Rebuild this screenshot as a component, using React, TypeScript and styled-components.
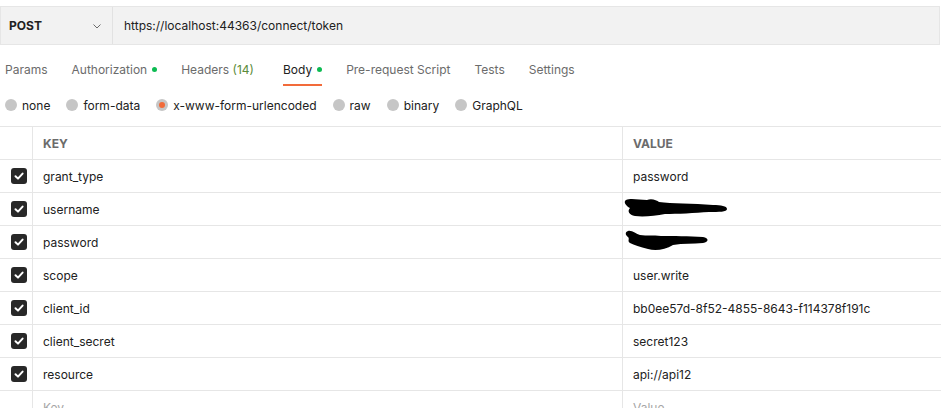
import React from 'react';
import styled, { createGlobalStyle } from 'styled-components';

const Global = createGlobalStyle`
  body {
    margin: 0;
    background: #ffffff;
    font-family: Inter, "Noto Sans", sans-serif;
    color: #212121;
  }
`;

const Page = styled.div`
  width: 941px;
  height: 408px;
  box-sizing: border-box;
  padding-top: 6px;
  overflow: hidden;
`;

const UrlBar = styled.div`
  width: 938px;
  height: 37px;
  background: #f2f2f2;
  border: 1px solid #e6e6e6;
  display: flex;
  align-items: stretch;
`;

const Method = styled.div`
  width: 112px;
  border-right: 1px solid #e2e2e2;
  display: flex;
  align-items: center;
  justify-content: space-between;
  padding: 0 10px 0 8px;
  box-sizing: border-box;
  font-weight: 700;
  font-size: 12px;
  color: #212121;
`;

const Url = styled.div`
  display: flex;
  align-items: center;
  padding-left: 11px;
  font-size: 12px;
  color: #212121;
`;

const TabRow = styled.div`
  display: flex;
  align-items: flex-end;
  height: 41px;
  padding-left: 5px;
  gap: 24px;
`;

const Tab = styled.div<{ $active?: boolean }>`
  display: flex;
  align-items: center;
  gap: 5px;
  height: 30px;
  box-sizing: border-box;
  font-size: 12px;
  color: ${(p) => (p.$active ? '#212121' : '#6b6b6b')};
  border-bottom: 2px solid ${(p) => (p.$active ? '#f26b3a' : 'transparent')};
  padding-bottom: 2px;
`;

const Count = styled.span`
  color: #5b8c3a;
  margin-right: 5px;
`;

const Dot = styled.span`
  width: 5px;
  height: 5px;
  border-radius: 50%;
  background: #0cbb52;
`;

const RadioRow = styled.div`
  display: flex;
  align-items: center;
  height: 38px;
  padding-left: 5px;
  gap: 16px;
`;

const Radio = styled.label`
  display: flex;
  align-items: center;
  gap: 5px;
  font-size: 12px;
  color: #212121;
`;

const Circle = styled.span<{ $on?: boolean }>`
  width: 12px;
  height: 12px;
  border-radius: 50%;
  background: #c6c6c6;
  display: flex;
  align-items: center;
  justify-content: center;
  &::after {
    content: '';
    width: 6px;
    height: 6px;
    border-radius: 50%;
    background: ${(p) => (p.$on ? '#f26b3a' : 'transparent')};
  }
`;

const Table = styled.div`
  border-top: 1px solid #e6e6e6;
  display: grid;
  grid-template-columns: 33px 590px 1fr;
  margin-top: 2px;
`;

const Cell = styled.div<{ $head?: boolean; $first?: boolean }>`
  height: 32px;
  border-bottom: 1px solid #e6e6e6;
  border-right: 1px solid #e6e6e6;
  display: flex;
  align-items: center;
  justify-content: ${(p) => (p.$first ? 'center' : 'flex-start')};
  padding-left: ${(p) => (p.$first ? '0' : '10px')};
  font-size: 12px;
  font-weight: ${(p) => (p.$head ? 700 : 400)};
  color: ${(p) => (p.$head ? '#6b6b6b' : '#212121')};
  position: relative;
  &:nth-child(3n) {
    border-right: none;
  }
`;

const Placeholder = styled.span`
  color: #a6a6a6;
`;

const Check = styled.span`
  width: 16px;
  height: 16px;
  border-radius: 3px;
  background: #282828;
  display: flex;
  align-items: center;
  justify-content: center;
  margin-left: 6px;
`;

const Scribble = styled.svg`
  position: absolute;
  left: 0;
  top: 4px;
`;

const Chevron = () => (
  <svg width="10" height="10" viewBox="0 0 10 10">
    <path d="M1.5 3.5 L5 7 L8.5 3.5" fill="none" stroke="#6b6b6b" strokeWidth="1" />
  </svg>
);

const Tick = () => (
  <svg width="12" height="12" viewBox="0 0 12 12">
    <path d="M2.5 6.2 L5 8.6 L9.6 3.6" fill="none" stroke="#ffffff" strokeWidth="2" strokeLinecap="round" strokeLinejoin="round" />
  </svg>
);

const Redact1 = () => (
  <Scribble width="110" height="26" viewBox="0 0 110 26">
    <path d="M3 3 C8 1 16 3 24 3 C28 1 34 3 36 5 C48 7 70 6 90 8 C98 8 104 9 104 12 C104 15 96 15 86 15 C72 16 54 17 42 17 C32 19 20 20 12 19 C6 18 4 14 7 11 C3 9 0 5 3 3 Z" fill="#000" />
  </Scribble>
);

const Redact2 = () => (
  <Scribble width="110" height="26" viewBox="0 0 110 26">
    <path d="M5 1 C9 0 13 4 17 5 C24 6 30 5 38 6 C50 6 66 6 80 7 C86 8 86 12 80 13 C70 14 60 13 50 15 C42 20 32 21 25 19 C17 17 11 15 7 13 C4 11 7 9 5 7 C2 5 2 2 5 1 Z" fill="#000" />
  </Scribble>
);

const tabs = [
  { name: 'Params' },
  { name: 'Authorization', dot: true },
  { name: 'Headers', count: '(14)' },
  { name: 'Body', dot: true, active: true },
  { name: 'Pre-request Script' },
  { name: 'Tests' },
  { name: 'Settings' },
];

const radios = ['none', 'form-data', 'x-www-form-urlencoded', 'raw', 'binary', 'GraphQL'];

const rows: { key: string; value: string; redact?: number }[] = [
  { key: 'grant_type', value: 'password' },
  { key: 'username', value: '', redact: 1 },
  { key: 'password', value: '', redact: 2 },
  { key: 'scope', value: 'user.write' },
  { key: 'client_id', value: 'bb0ee57d-8f52-4855-8643-f114378f191c' },
  { key: 'client_secret', value: 'secret123' },
  { key: 'resource', value: 'api://api12' },
];

export default function App() {
  return (
    <Page>
      <Global />
      <UrlBar>
        <Method>
          POST
          <Chevron />
        </Method>
        <Url>https://localhost:44363/connect/token</Url>
      </UrlBar>
      <TabRow>
        {tabs.map((t) => (
          <Tab key={t.name} $active={t.active}>
            <span>
              {t.name}
              {t.count && <Count> {t.count}</Count>}
            </span>
            {t.dot && <Dot />}
          </Tab>
        ))}
      </TabRow>
      <RadioRow>
        {radios.map((r) => (
          <Radio key={r}>
            <Circle $on={r === 'x-www-form-urlencoded'} />
            {r}
          </Radio>
        ))}
      </RadioRow>
      <Table>
        <Cell $head $first />
        <Cell $head>KEY</Cell>
        <Cell $head>VALUE</Cell>
        {rows.map((r) => (
          <React.Fragment key={r.key}>
            <Cell $first>
              <Check>
                <Tick />
              </Check>
            </Cell>
            <Cell>{r.key}</Cell>
            <Cell>
              {r.value}
              {r.redact === 1 && <Redact1 />}
              {r.redact === 2 && <Redact2 />}
            </Cell>
          </React.Fragment>
        ))}
        <Cell $first />
        <Cell>
          <Placeholder>Key</Placeholder>
        </Cell>
        <Cell>
          <Placeholder>Value</Placeholder>
        </Cell>
      </Table>
    </Page>
  );
}
